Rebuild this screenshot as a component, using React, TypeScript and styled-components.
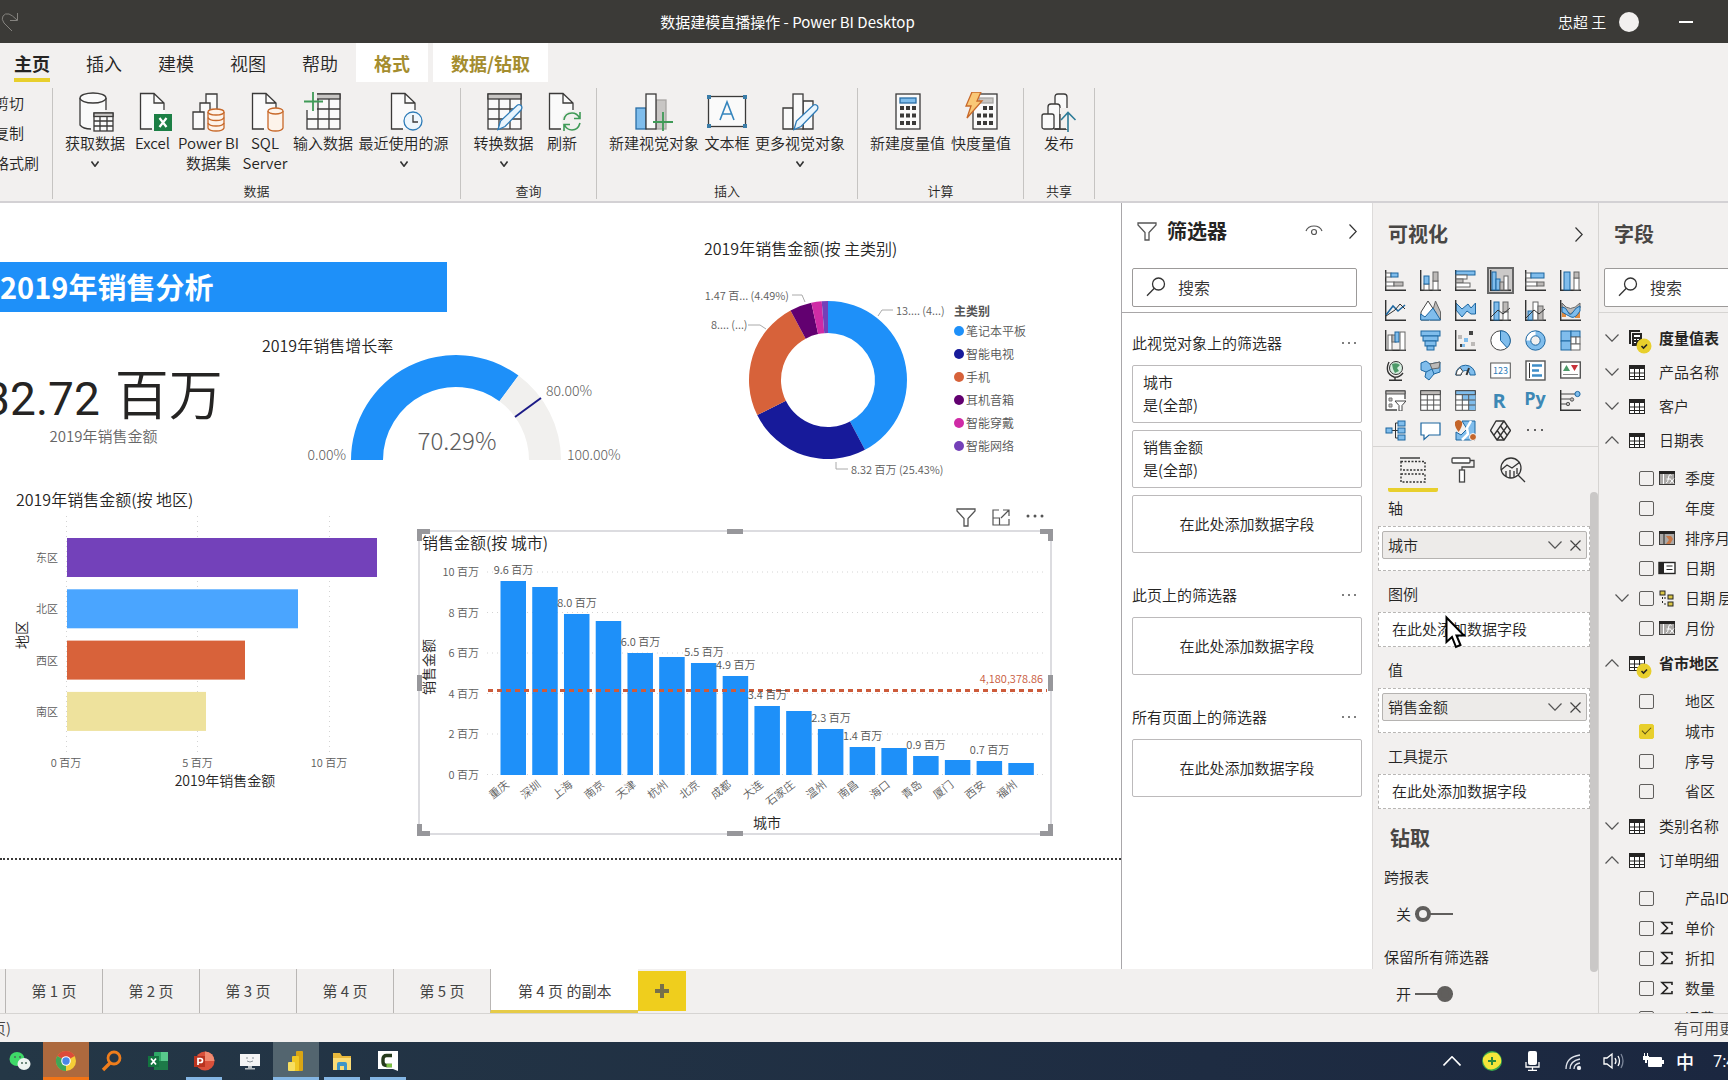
import React from 'react';
import styled, { createGlobalStyle, css } from 'styled-components';

const FONT = '"Noto Sans CJK SC", sans-serif';
const LABEL_FONT = '"Open Sans", "Noto Sans CJK SC", sans-serif';
const INK = '#252423';
const DARK = '#3b3a39';
const BLUE = '#1e90f9';
const SKY = '#80bdec';
const EDGE = '#1c66a0';
const GREY = '#bdbab8';
const YELLOW = '#e8cf2c';

const Global = createGlobalStyle`
  *, *::before, *::after { box-sizing: border-box; }
  body { margin: 0; overflow: hidden; background: #f2f0ef; color: ${INK}; font: 350 15px/20px ${FONT}; }
  button { border: 0; padding: 0; background: none; color: inherit; font: inherit; cursor: default; }
  input { margin: 0; font: inherit; color: inherit; }
  h1, h2, h3, p, ul { margin: 0; padding: 0; list-style: none; font-weight: 350; }
  svg { display: block; flex: none; }
`;

const Shell = styled.div`
  display: flex;
  flex-direction: column;
  height: 100vh;
  overflow: hidden;
`;

/* ---------- title bar ---------- */
const TitleBar = styled.header`
  display: flex;
  align-items: center;
  height: 43px;
  flex: none;
  background: #3b3a37;
  color: #fff;
`;
const WindowTitle = styled.h1`
  flex: 1;
  text-align: center;
  font-size: 15px;
  font-weight: 400;
`;
const Account = styled.div`
  display: flex;
  align-items: center;
  gap: 13px;
  width: 173px;
  padding-left: 3px;
`;
const Avatar = styled.span`
  width: 20px;
  height: 20px;
  border-radius: 50%;
  background: #f2f0ef;
`;
const Minimise = styled.button`
  width: 14px;
  height: 2px;
  margin-left: 27px;
  background: #fff;
`;

/* ---------- ribbon ---------- */
const Ribbon = styled.div`
  flex: none;
  padding-bottom: 2px;
  border-bottom: 2px solid #d3d1d4;
`;
const RibbonTabs = styled.nav`
  display: flex;
  height: 39px;
  margin: 0 0 6px -4px;
`;
const RibbonTab = styled.button<{ $active?: boolean; $context?: boolean }>`
  position: relative;
  padding: 0 18px;
  font-size: 18px;
  ${p => p.$active && css`
    font-weight: 700;
    &::after {
      content: '';
      position: absolute;
      left: 18px;
      right: 18px;
      bottom: 0;
      height: 4px;
      background: ${YELLOW};
    }
  `}
  ${p => p.$context && css`
    margin-right: 5px;
    background: #fff;
    color: #a48d2f;
    font-weight: 700;
  `}
`;
const RibbonGroups = styled.div`
  display: flex;
  height: 111px;
`;
const Group = styled.section`
  display: flex;
  flex-direction: column;
  justify-content: space-between;
  padding: 4px 9px 0;
  border-right: 1px solid #c6c4c2;
`;
const GroupItems = styled.div`
  display: flex;
`;
const GroupLabel = styled.h2`
  padding-bottom: 1px;
  text-align: center;
  font-size: 13px;
  line-height: 14px;
`;
const Command = styled.button<{ $w: number }>`
  display: flex;
  flex-direction: column;
  align-items: center;
  width: ${p => p.$w}px;
  white-space: nowrap;
  & > svg:first-child { margin-bottom: 1px; }
  & > svg + span + svg { margin-top: 8px; }
`;
const CommandText = styled.span`
  white-space: pre;
`;
const Clipboard = styled.section`
  display: flex;
  flex-direction: column;
  align-items: flex-start;
  width: 53px;
  border-right: 1px solid #c6c4c2;
  overflow: hidden;
`;
const ClipCommand = styled.button`
  margin-left: -6px;
  line-height: 30px;
  white-space: nowrap;
`;

/* ---------- workspace ---------- */
const Workspace = styled.main`
  display: flex;
  flex: 1;
  min-height: 0;
`;
const ReportSide = styled.div`
  display: flex;
  flex-direction: column;
  flex: 1;
  min-width: 0;
`;
const ReportRow = styled.div`
  display: flex;
  flex: 1;
  min-height: 0;
`;
const Canvas = styled.div`
  flex: 1;
  min-width: 0;
  overflow: hidden;
  background: #fff;
`;
const Page = styled.article`
  padding-bottom: 23px;
  border-bottom: 2px dotted #3b3a39;
`;
const TopRow = styled.div`
  display: flex;
`;
const Summary = styled.div`
  width: 700px;
  padding-top: 59px;
`;
const Banner = styled.h2`
  width: 447px;
  padding-bottom: 2px;
  background: ${BLUE};
  color: #fff;
  font-weight: 700;
  font-size: 29px;
  line-height: 48px;
`;
const SummaryRow = styled.div`
  display: flex;
  gap: 55px;
`;
const Card = styled.section`
  display: flex;
  flex-direction: column;
  align-items: center;
  width: 207px;
  padding-top: 50px;
`;
const CardValue = styled.p`
  display: flex;
  align-items: baseline;
  gap: 15px;
  height: 64px;
  font-size: 54px;
  line-height: 60px;
  white-space: nowrap;
`;
const CardNumber = styled.span`
  font-family: Roboto, sans-serif;
  font-size: 46px;
  font-weight: 400;
`;
const CardLabel = styled.p`
  font-size: 15px;
  color: #666;
`;
const VisualTitle = styled.h3`
  padding-bottom: 2px;
  font-size: 16px;
  line-height: 18px;
  white-space: nowrap;
`;
const Gauge = styled.section`
  padding-top: 24px;
  svg { margin-left: 38px; overflow: visible; }
`;
const Donut = styled.section`
  flex: 1;
  padding: 36px 0 0 4px;
`;
const DonutBody = styled.div`
  display: flex;
  gap: 9px;
  margin: 20px 0 0 -4px;
`;
const Legend = styled.div`
  padding-top: 24px;
  color: #555;
  font-size: 12px;
  line-height: 16px;
`;
const LegendTitle = styled.h4`
  margin: 0;
  font-weight: 700;
  font-size: 12px;
`;
const LegendItem = styled.li<{ $c: string }>`
  display: flex;
  align-items: center;
  gap: 2px;
  height: 23px;
  white-space: nowrap;
  &::before {
    content: '';
    width: 10px;
    height: 10px;
    border-radius: 50%;
    background: ${p => p.$c};
  }
`;
const BottomRow = styled.div`
  display: flex;
  padding-top: 6px;
`;
const RegionVisual = styled.section`
  width: 418px;
  h3 { padding-left: 16px; }
`;
const CityVisual = styled.section`
  width: 634px;
`;
const VisualHeader = styled.div`
  display: flex;
  justify-content: flex-end;
  align-items: center;
  gap: 16px;
  height: 40px;
  padding: 14px 8px 0 0;
`;
const Frame = styled.div`
  position: relative;
  padding-top: 1px;
  border: 2px solid #dcdce0;
  h3 { padding: 0 0 3px 2px; }
`;
const Handle = styled.i<{ $at: string }>`
  position: absolute;
  ${p => ({
    tl: 'left:-3px;top:-3px;width:13px;height:12px;border-left:5px solid;border-top:5px solid;',
    tr: 'right:-3px;top:-3px;width:13px;height:12px;border-right:5px solid;border-top:5px solid;',
    bl: 'left:-3px;bottom:-3px;width:13px;height:12px;border-left:5px solid;border-bottom:5px solid;',
    br: 'right:-3px;bottom:-3px;width:13px;height:12px;border-right:5px solid;border-bottom:5px solid;',
    t: 'left:50%;top:-3px;width:16px;border-top:5px solid;margin-left:-8px;',
    b: 'left:50%;bottom:-3px;width:16px;border-top:5px solid;margin-left:-8px;',
    l: 'left:-3px;top:50%;height:16px;border-left:5px solid;margin-top:-8px;',
    r: 'right:-3px;top:50%;height:16px;border-left:5px solid;margin-top:-8px;',
  } as Record<string, string>)[p.$at]}
  border-color: #97979b;
`;
const Chart = styled.svg`
  overflow: visible;
  font-size: 11px;
  fill: #5c5c5c;
`;

/* ---------- page tabs ---------- */
const PageTabs = styled.nav`
  display: flex;
  flex: none;
  height: 45px;
  padding-left: 5px;
  border-bottom: 1px solid #d6d4d2;
`;
const PageTab = styled.button<{ $active?: boolean }>`
  padding: 0 25px;
  min-width: 97px;
  border-left: 1px solid #b9b6b4;
  font-weight: 400;
  color: #444;
  white-space: nowrap;
  ${p => p.$active && css`
    padding: 3px 27px 0;
    background: #fff;
    border-bottom: 3px solid #e6cb48;
  `}
`;
const AddPage = styled.button`
  display: grid;
  place-items: center;
  width: 48px;
  height: 40px;
  margin-top: 2px;
  background: #efce1d;
`;

/* ---------- filters pane ---------- */
const Filters = styled.aside`
  width: 252px;
  flex: none;
  border-left: 1px solid #a9a7aa;
  border-right: 1px solid #dddbda;
  background: #fff;
`;
const FiltersTop = styled.div`
  padding: 15px 15px 5px 10px;
  border-bottom: 1px solid #a9a7a8;
`;
const PaneHead = styled.div`
  display: flex;
  align-items: center;
  gap: 10px;
  height: 26px;
  margin-bottom: 24px;
  padding-left: 5px;
`;
const PaneTitle = styled.h2<{ $soft?: boolean }>`
  flex: 1;
  font-size: 20px;
  font-weight: 700;
  line-height: 26px;
  color: ${p => (p.$soft ? '#484644' : INK)};
`;
const EyeButton = styled.button`
  margin-right: 16px;
`;
const SearchBox = styled.label`
  display: flex;
  align-items: center;
  gap: 12px;
  height: 39px;
  padding: 0 0 1px 13px;
  border: 1px solid #9c9a99;
  border-radius: 2px;
  background: #fff;
  input {
    min-width: 0;
    width: 100%;
    border: 0;
    padding: 0;
    background: none;
    outline: 0;
    font-size: 16px;
    &::placeholder { color: #333; opacity: 1; }
  }
`;
const FilterSection = styled.section`
  padding: 0 10px 32px;
  &:first-of-type { padding-top: 20px; }
`;
const FilterHead = styled.div`
  display: flex;
  justify-content: space-between;
  align-items: center;
  height: 20px;
  margin-bottom: 12px;
  padding-right: 5px;
`;
const FilterCard = styled.div<{ $drop?: boolean }>`
  display: flex;
  flex-direction: column;
  justify-content: center;
  height: 58px;
  padding: 0 10px 2px;
  border: 1px solid #bcbabb;
  border-radius: 2px;
  line-height: 23px;
  ${p => p.$drop && 'align-items: center;'}
  & + & { margin-top: 7px; }
`;

/* ---------- visualizations pane ---------- */
const VizPane = styled.aside`
  display: flex;
  flex-direction: column;
  width: 226px;
  flex: none;
  border-right: 1px solid #d6d4d2;
  border-bottom: 1px solid #d6d4d2;
`;
const VizTitle = styled.div`
  display: flex;
  align-items: center;
  height: 26px;
  margin: 18px 15px 20px;
`;
const VizGrid = styled.div`
  display: grid;
  grid-template-columns: repeat(6, 35px);
  grid-auto-rows: 27px;
  row-gap: 3px;
  padding: 0 0 2px 5px;
  border-bottom: 1px solid #d6d4d2;
`;
const VizButton = styled.button<{ $on?: boolean }>`
  display: grid;
  place-items: center;
  width: 27px;
  height: 27px;
  margin: 0 4px;
  ${p => p.$on && 'background: #cbc9c8; outline: 2px solid #666; outline-offset: -2px;'}
`;
const VizTabs = styled.div`
  display: flex;
  height: 45px;
  padding-left: 15px;
`;
const VizTab = styled.button<{ $on?: boolean }>`
  display: flex;
  flex-direction: column;
  align-items: center;
  width: 50px;
  padding-top: 10px;
  ${p => p.$on && css`
    border-bottom: 4px solid ${YELLOW};
    border-radius: 2px;
  `}
`;
const WellScroll = styled.div`
  display: flex;
  flex: 1;
  min-height: 0;
  overflow: hidden;
`;
const Wells = styled.div`
  flex: 1;
  padding: 7px 0 0 5px;
`;
const ScrollBar = styled.div`
  width: 8px;
  height: 480px;
  border-radius: 4px;
  background: #cac8c7;
`;
const WellLabel = styled.h3`
  margin-bottom: 9px;
  padding-left: 10px;
  font-size: 15px;
  line-height: 18px;
`;
const Well = styled.div`
  margin-bottom: 14px;
  border: 1px dashed #b8b6b4;
  background: #fff;
`;
const WellEmpty = styled.p`
  padding: 0 0 2px 13px;
  line-height: 31px;
`;
const WellItem = styled.div`
  display: flex;
  align-items: center;
  gap: 8px;
  height: 28px;
  margin: 4px 2px 11px 3px;
  padding: 0 5px;
  border: 1px solid #b5b3b1;
  border-radius: 2px;
  background: #edebe9;
  span { flex: 1; }
`;
const DrillTitle = styled.h2`
  margin: 16px 0;
  padding-left: 12px;
  font-size: 20px;
  font-weight: 700;
  line-height: 26px;
  color: #484644;
`;
const DrillLabel = styled.p`
  padding-left: 6px;
`;
const Toggle = styled.label`
  display: flex;
  align-items: center;
  gap: 4px;
  margin: 17px 0 23px;
  padding-left: 18px;
  input {
    appearance: none;
    display: flex;
    align-items: center;
    width: 38px;
    height: 16px;
    background: linear-gradient(#605e5c, #605e5c) 0 50% / 100% 2px no-repeat;
    &::before {
      content: '';
      width: 16px;
      height: 16px;
      border: 4px solid #605e5c;
      border-radius: 50%;
      background: #f2f0ef;
    }
    &:checked { justify-content: flex-end; }
    &:checked::before { background: #605e5c; }
  }
`;
const Cursor = styled.svg`
  position: fixed;
  left: 1445px;
  top: 615px;
`;

/* ---------- fields pane ---------- */
const Fields = styled.aside`
  display: flex;
  flex-direction: column;
  width: 129px;
  flex: none;
  overflow: hidden;
  white-space: nowrap;
  border-bottom: 1px solid #d6d4d2;
`;
const FieldsTop = styled.div`
  padding: 18px 0 5px 5px;
  border-bottom: 1px solid #d6d4d2;
  label { width: 220px; margin-top: 21px; }
  h2 { padding-left: 10px; }
`;
const Tree = styled.ul`
  flex: 1;
  min-height: 0;
  overflow: hidden;
  padding-top: 8px;
`;
const TableRow = styled.button<{ $bold?: boolean }>`
  display: flex;
  align-items: center;
  height: 34px;
  padding-left: 6px;
  font-weight: ${p => (p.$bold ? 700 : 350)};
  & > svg:nth-child(2) { margin: 0 13px 0 9px; overflow: visible; }
`;
const Children = styled.ul`
  padding: 6px 0 3px;
`;
const FieldRow = styled.li`
  display: flex;
  align-items: center;
  height: 30px;
`;
const Twist = styled.button`
  display: flex;
  flex: none;
  justify-content: center;
  width: 14px;
  margin: 0 10px 0 16px;
`;
const FieldLabel = styled.label`
  display: flex;
  flex: none;
  align-items: center;
`;
const Check = styled.input`
  appearance: none;
  display: grid;
  flex: none;
  place-items: center;
  width: 15px;
  height: 15px;
  border: 1px solid #605e5c;
  border-radius: 2px;
  &:checked { border-color: ${YELLOW}; background: ${YELLOW}; }
  &:checked::before {
    content: '';
    width: 9px;
    height: 5px;
    margin-top: -3px;
    border: solid #5c5216;
    border-width: 0 0 1px 1px;
    transform: rotate(-45deg);
  }
`;
const FieldGlyph = styled.span`
  display: flex;
  flex: none;
  justify-content: center;
  width: 18px;
  margin: 0 9px 0 4px;
`;

/* ---------- status and task bar ---------- */
const StatusBar = styled.footer`
  display: flex;
  justify-content: space-between;
  align-items: center;
  height: 28px;
  flex: none;
  overflow: hidden;
  white-space: nowrap;
`;
const PageCount = styled.span`
  margin-left: -9px;
  color: #444;
`;
const UpdateLink = styled.a`
  width: 54px;
  color: #444;
  text-decoration: none;
`;
const Taskbar = styled.div`
  display: flex;
  height: 38px;
  flex: none;
  background: linear-gradient(90deg, #243746, #1e2c42 70%, #1b2740);
  color: #fff;
`;
const AppButton = styled.button<{ $bg?: string; $line?: string; $wide?: boolean }>`
  position: relative;
  display: grid;
  place-items: center;
  width: 46px;
  background: ${p => p.$bg || 'none'};
  &:first-child { margin-left: -3px; }
  &::after {
    content: '';
    position: absolute;
    left: ${p => (p.$wide ? 0 : 5)}px;
    right: ${p => (p.$wide ? 0 : 5)}px;
    bottom: 0;
    height: 3px;
    background: ${p => p.$line || 'none'};
  }
`;
const Tray = styled.div`
  display: flex;
  align-items: center;
  gap: 19px;
  width: 285px;
  margin-left: auto;
  white-space: nowrap;
  & > svg:first-child { margin-right: 2px; }
`;
const Ime = styled.span`
  margin-left: -7px;
  font-size: 18px;
  font-weight: 500;
`;
const Clock = styled.time`
  font-family: ${LABEL_FONT};
  font-size: 16px;
  font-weight: 400;
`;

/* ---------- small glyphs ---------- */
const Chevron = ({ d, w = 14, h = 8, c = '#555', s = 1.2 }: { d: 'up' | 'down' | 'right'; w?: number; h?: number; c?: string; s?: number }) => (
  <svg width={w} height={h} fill="none" stroke={c} strokeWidth={s}>
    <path d={d === 'up' ? `M.5 ${h - 0.5}L${w / 2} .8L${w - 0.5} ${h - 0.5}` : d === 'down' ? `M.5 .5L${w / 2} ${h - 0.8}L${w - 0.5} .5` : `M.5 .5L${w - 0.8} ${h / 2}L.5 ${h - 0.5}`} />
  </svg>
);
const Magnifier = () => (
  <svg width="20" height="20" fill="none" stroke="#333" strokeWidth="1.3"><circle cx="12.5" cy="7" r="6" /><path d="M8.3 11.3L1 18.8" /></svg>
);
const Funnel = () => (
  <svg width="20" height="19" fill="none" stroke="#555" strokeWidth="1.3"><path d="M1 1H19V3L12 10.500V18H8V10.500L1 3Z" /></svg>
);
const Dots = () => (
  <svg width="16" height="4" fill="#555"><circle cx="2" cy="2" r="1" /><circle cx="8" cy="2" r="1" /><circle cx="14" cy="2" r="1" /></svg>
);

/* ---------- ribbon glyphs ---------- */
const R = ({ children }: { children: React.ReactNode }) => (
  <svg width="38" height="40" fill="#fafafa" stroke={DARK} strokeWidth="1.3">{children}</svg>
);
const Doc = () => <><path d="M7 1.500H20L31 11V37H7Z" stroke="none" /><path d="M18 37H6.500V1.500H20L30 11V18M20 1.500V11H30" fill="none" /></>;
const TableArt = ({ x = 2 }: { x?: number }) => (
  <><rect x={x} y="2" width="33" height="35" /><rect x={x} y="2" width="33" height="5" fill="#c8c6c4" /><path d={`M${x} 17h33M${x} 27h33M${x + 11} 7v30M${x + 22} 7v30`} fill="none" /></>
);
const Pencil = () => <path d="M13 37.500L15.500 29L32.500 13Q35 12 36.500 14Q37.500 16 36 18L20 34.500Z" fill="#e9f5fd" stroke="#2e7cb8" />;

const ribbonArt: Record<string, React.ReactNode> = {
  data: <R><path d="M4 6V33Q7 37 17 37V22H29V6" stroke="none" /><path d="M4 6V33Q7 37 15 37M30 6V18" fill="none" /><ellipse cx="17" cy="6" rx="13" ry="5" /><rect x="18" y="21" width="19" height="18" /><rect x="18" y="21" width="19" height="3.500" fill="#c8c6c4" /><path d="M18 29h19M18 34h19M24 24.500V39M31 24.500V39" /></R>,
  excel: <R><Doc /><rect x="20" y="22" width="18" height="17" fill="#1c7f45" stroke="none" /><path d="M25.500 26L32.500 35M32.500 26L25.500 35" stroke="#fff" strokeWidth="2.200" /></R>,
  dataset: <R><path d="M16 11V2H27V18M10 20V11H20V30M3 37V20H14V37Z" /><path d="M18 20V36Q19 39 26 39T34 36V20" fill="#fdf3ea" stroke="#c8692a" /><ellipse cx="26" cy="20" rx="8" ry="3" fill="#fdf3ea" stroke="#c8692a" /><path d="M18 25.500Q19 28.500 26 28.500T34 25.500M18 31Q19 34 26 34T34 31" fill="none" stroke="#c8692a" /></R>,
  sql: <R><Doc /><path d="M22 19V36Q23 39 29.500 39T37 36V19" fill="#fdf3ea" stroke="#c8692a" /><ellipse cx="29.500" cy="19" rx="7.500" ry="3" fill="#fdf3ea" stroke="#c8692a" /></R>,
  enter: <R><TableArt x={3} /><path d="M0 0h13v18H0z" fill="#f2f0ef" stroke="none" /><path d="M9 0V19M0 9.500H19" stroke="#3f9a57" strokeWidth="1.800" /></R>,
  recent: <R><Doc /><circle cx="28" cy="29" r="9" fill="#eef7fd" stroke="#2e7cb8" /><path d="M28 23V30H33" fill="none" /></R>,
  transform: <R><TableArt x={3} /><Pencil /></R>,
  refresh: <R><Doc /><circle cx="29" cy="29" r="10.500" fill="#f2f0ef" stroke="none" /><path d="M21 28Q22 21 29 21Q34 21 36.500 26M37 20V26.500H31M37 31Q35 38 29 38Q24 38 21.500 33M21 39V32.500H27" fill="none" stroke="#3f9a57" strokeWidth="1.600" /></R>,
  visual: <R><rect x="1" y="16" width="10" height="21" fill="#7fbdec" stroke="#2a6ea6" /><rect x="21" y="8" width="10" height="29" fill="#c8c6c4" stroke="#a8a6a4" /><rect x="11" y="2" width="10" height="35" /><path d="M28 20V39M18 30H38" stroke="#3f9a57" strokeWidth="1.800" /></R>,
  textbox: <svg width="42" height="40" fill="#fafafa" stroke={DARK} strokeWidth="1.300"><rect x="2.500" y="4.500" width="37" height="30" /><path d="M14 28L21 10L28 28M16 22H26" fill="none" stroke="#3585bd" strokeWidth="1.600" /><path d="M1 3h4v4H1zM37 3h4v4h-4zM1 32h4v4H1zM37 32h4v4h-4z" fill="#3b7da8" stroke="none" /></svg>,
  more: <R><path d="M2 16H12V37H2ZM22 9H32V37H22Z" /><rect x="12" y="2" width="10" height="35" /><Pencil /></R>,
  measure: <R><rect x="7" y="2" width="24" height="35" /><rect x="11" y="6" width="16" height="5" fill="#7fbdec" stroke="#2a6ea6" /><path d="M11 16h4M17 16h4M23 16h4M11 23.500h4M17 23.500h4M23 23.500h4M11 31h4M17 31h4M23 31h4" strokeWidth="4" /></R>,
  quick: <R><rect x="11" y="2" width="24" height="35" /><rect x="17" y="6" width="14" height="5" fill="#c8c6c4" stroke="#a8a6a4" /><path d="M15 23.500h4M21 23.500h4M27 23.500h4M15 31h4M21 31h4M27 31h4M21 16h4M27 16h4" strokeWidth="4" /><path d="M10 0H19L15 9H20L5 26L9 14H4Z" fill="#f9c877" stroke="#c8692a" /></R>,
  publish: <R><path d="M15 12V5Q15 2 18 2H24Q27 2 27 5V37H15M8 22V15Q8 12 11 12H17Q20 12 20 15V37" /><rect x="2" y="22" width="12" height="15" rx="2" /><path d="M20 16H34V37H20" fill="#f2f0ef" stroke="none" /><path d="M14 37H26M20 22V37" /><path d="M28 40V21M21 28L28 20.500L35.500 28" fill="none" stroke="#2e7c98" strokeWidth="1.600" /></R>,
};

type Cmd = { icon: string; text: string; w: number; menu?: boolean };
const groups: { label: string; items: Cmd[] }[] = [
  { label: '数据', items: [
    { icon: 'data', text: '获取数据', w: 66, menu: true },
    { icon: 'excel', text: 'Excel', w: 49 },
    { icon: 'dataset', text: 'Power BI\n数据集', w: 63 },
    { icon: 'sql', text: 'SQL\nServer', w: 50 },
    { icon: 'enter', text: '输入数据', w: 66 },
    { icon: 'recent', text: '最近使用的源', w: 95, menu: true },
  ] },
  { label: '查询', items: [{ icon: 'transform', text: '转换数据', w: 67, menu: true }, { icon: 'refresh', text: '刷新', w: 50 }] },
  { label: '插入', items: [{ icon: 'visual', text: '新建视觉对象', w: 96 }, { icon: 'textbox', text: '文本框', w: 50 }, { icon: 'more', text: '更多视觉对象', w: 96, menu: true }] },
  { label: '计算', items: [{ icon: 'measure', text: '新建度量值', w: 81 }, { icon: 'quick', text: '快度量值', w: 66 }] },
  { label: '共享', items: [{ icon: 'publish', text: '发布', w: 52 }] },
];

/* ---------- visual type glyphs, 21 x 21 ---------- */
const Axis = () => <path d="M.7 0V20.300H21" fill="none" stroke="#333" strokeWidth="1.400" />;
type Box = [number, number, number, number, ('b' | 'w' | 'g')];
const Boxes = ({ list }: { list: Box[] }) => (
  <>{list.map(([x, y, w, h, c], i) => (
    <rect key={i} x={x} y={y} width={w} height={h} fill={c === 'b' ? SKY : c === 'g' ? GREY : '#fff'} stroke={c === 'b' ? EDGE : '#666'} />
  ))}</>
);
const Grid = ({ blue }: { blue?: boolean }) => (
  <>
    <rect x=".7" y=".7" width="19.600" height="19.600" fill="#fff" stroke="#444" />
    {blue && <path d="M7 5h13.500v5.500H7zM13.500 10H20.500V20H13.500z" fill={SKY} />}
    <path d="M.7 .7h19.600v4H.7z" fill={blue ? SKY : GREY} stroke="#444" />
    <path d="M.7 10h19.600M.7 15h19.600M7.300 5v15M13.700 5v15" stroke="#555" fill="none" />
  </>
);
const vizArt: [string, React.ReactNode][] = [
  ['堆积条形图', <><Axis /><Boxes list={[[1, 3, 5, 4, 'w'], [6, 3, 7, 4, 'b'], [1, 12, 8, 4, 'w'], [9, 12, 9, 4, 'g']]} /></>],
  ['堆积柱形图', <><Axis /><Boxes list={[[4, 14, 5, 6, 'w'], [4, 6, 5, 8, 'b'], [13, 11, 5, 9, 'w'], [13, 2, 5, 9, 'g']]} /></>],
  ['簇状条形图', <><Axis /><Boxes list={[[1, 1, 19, 4, 'b'], [1, 5, 11, 4, 'w'], [1, 9, 7, 4, 'g'], [1, 13, 14, 4, 'w']]} /></>],
  ['簇状柱形图', <><Axis /><Boxes list={[[2, 2, 4, 18, 'b'], [6, 9, 4, 11, 'b'], [10, 12, 4, 8, 'g'], [14, 6, 4, 14, 'w']]} /></>],
  ['百分比条形图', <><Axis /><Boxes list={[[1, 3, 5, 5, 'w'], [6, 3, 13, 5, 'b'], [1, 12, 11, 4, 'w'], [12, 12, 7, 4, 'g']]} /></>],
  ['百分比柱形图', <><Axis /><Boxes list={[[4, 2, 6, 18, 'b'], [14, 8, 5, 12, 'w'], [14, 2, 5, 6, 'g']]} /></>],
  ['折线图', <><Axis /><path d="M1 15L8 6L13 11L20 5" fill="none" stroke={EDGE} strokeWidth="1.500" /><path d="M1 16L10 10L15 4L20 9" fill="none" stroke="#333" /></>],
  ['分区图', <><path d="M10 20L15.500 1L20.500 12V20Z" fill={GREY} stroke="#666" /><path d="M1 12L8 1L16 13L9 20H1Z" fill="#fff" stroke="#444" /><path d="M.7 20V14L5 17L13 8L20.500 20Z" fill={SKY} stroke={EDGE} /></>],
  ['堆积面积图', <><path d="M1 3L7 9L13 4L16 8L20.500 3V14H16L12 11L7 17L1 10Z" fill={SKY} stroke={EDGE} /><Axis /></>],
  ['折线和堆积柱形图', <><Axis /><Boxes list={[[4, 2, 5, 18, 'b'], [13, 2, 5, 10, 'g'], [13, 12, 5, 8, 'w']]} /><path d="M1 17L8 10L13 14L20 8" fill="none" stroke="#333" /></>],
  ['折线和簇状柱形图', <><Axis /><Boxes list={[[3, 11, 5, 9, 'b'], [8, 2, 5, 18, 'w'], [13, 6, 5, 14, 'g']]} /><path d="M1 18L9 10L14 14L20 9" fill="none" stroke="#333" /></>],
  ['功能区图', <><path d="M2 12h4v5H2zM15 12h5v6h-5z" fill="#e08a3e" /><path d="M2 3Q10 14 20 3V8Q10 19 2 8Z" fill={GREY} stroke="#666" /><path d="M2 7Q6 7 8 12T13 12T20 6V11Q15 19 11 17T2 12Z" fill={SKY} stroke={EDGE} /><Axis /></>],
  ['瀑布图', <><Axis /><Boxes list={[[3, 5, 4, 15, 'w'], [7, 5, 4, 7, 'g'], [10, 2, 4, 10, 'b'], [15, 2, 5, 18, 'w']]} /></>],
  ['漏斗图', <Boxes list={[[1, 1, 19, 5, 'b'], [3, 6, 15, 5, 'b'], [5, 11, 11, 5, 'b'], [7, 16, 7, 4, 'b']]} />],
  ['散点图', <><Axis /><path d="M14 1h4v4h-4zM5 14h3v3H5z" fill="#444" /><path d="M3 5h4v4H3zM16 12h4v4h-4z" fill={GREY} /><path d="M9 8h4v4H9zM7 14h3v3H7z" fill={SKY} /></>],
  ['饼图', <><circle cx="10.500" cy="10.500" r="9.700" fill="#fff" stroke="#444" /><path d="M10.500 .8A9.700 9.700 0 0 1 17 17.700L10.500 10.500Z" fill={SKY} stroke={EDGE} /></>],
  ['环形图', <><circle cx="10.500" cy="10.500" r="7.200" fill="none" stroke={SKY} strokeWidth="5" /><path d="M10.500 3.300A7.200 7.200 0 0 0 3.300 10.500" fill="none" stroke="#fff" strokeWidth="5" /><circle cx="10.500" cy="10.500" r="9.700" fill="none" stroke={EDGE} /><circle cx="10.500" cy="10.500" r="4.700" fill="none" stroke={EDGE} /></>],
  ['树状图', <Boxes list={[[1, 1, 10, 10, 'b'], [1, 11, 10, 9, 'b'], [11, 1, 9, 6, 'b'], [11, 7, 5, 7, 'w'], [16, 7, 4, 7, 'w'], [11, 14, 9, 6, 'w']]} />],
  ['地图', <><circle cx="11" cy="8" r="6.500" fill="#d7eee0" stroke="#333" /><path d="M7 4Q12 2 15 5L12 8L14 11L10 13L8 9Z" fill="#4c9a68" /><path d="M4 2Q-1 13 9 17Q14 18 18 13M10 17V20M4 20.300H17" fill="none" stroke="#333" strokeWidth="1.400" /></>],
  ['着色地图', <><path d="M1 3L6 1L10 4L20 2L20 12L14 14L9 20L5 17L6 12L1 10Z" fill={SKY} stroke={EDGE} /><path d="M10 4L20 2L19 8L12 9Z" fill={GREY} stroke="#666" /><path d="M6 12L12 9L14 14" fill="none" stroke={EDGE} /></>],
  ['仪表', <><path d="M.7 15A9.800 9.800 0 0 1 20.300 15H15A4.500 4.500 0 0 0 6 15Z" fill={SKY} stroke={EDGE} /><path d="M1 15A9.800 9.800 0 0 1 5 7.500L8 11.500A4 4 0 0 0 6 15Z" fill="#fff" stroke="#444" /><path d="M14 8L11.500 15" stroke="#333" strokeWidth="2" /></>],
  ['卡片图', <><rect x=".7" y="3" width="19.600" height="15" fill="#fff" stroke="#555" /><text x="10.500" y="14" textAnchor="middle" fontSize="9" fontWeight="400" fill="#2e7cb8">123</text></>],
  ['多行卡', <><rect x="1" y="1" width="19" height="19" fill="#fff" stroke="#555" strokeWidth="1.400" /><path d="M4.500 3v15" stroke="#333" /><path d="M7 5.500h10M7 10.500h7M7 15.500h10" stroke="#3f8dc7" strokeWidth="2.400" /></>],
  ['KPI', <><rect x=".7" y="2" width="19.600" height="16" fill="#fff" stroke="#555" strokeWidth="1.400" /><path d="M3 11L6.500 5L10 11Z" fill="#4c9a68" /><path d="M11 5H18L14.500 11Z" fill="#c8323a" /><path d="M3 14.500h15" stroke="#888" /></>],
  ['切片器', <><path d="M12 20H1V1H20V9" fill="#fff" stroke="#444" strokeWidth="1.300" /><path d="M1 1h19v3H1z" fill={GREY} stroke="#555" /><path d="M4 8h3v3H4zM4 14h3v3H4z" fill={GREY} stroke="#777" /><path d="M10 11H21L17 15.500V21H14V15.500Z" fill="#fff" stroke="#444" /></>],
  ['表', <Grid />],
  ['矩阵', <Grid blue />],
  ['R', <text x="9" y="18" textAnchor="middle" fontSize="20" fontWeight="700" fontFamily="Open Sans, sans-serif" fill="#3d88b5">R</text>],
  ['Py', <text x="10" y="15" textAnchor="middle" fontSize="18" fontWeight="700" fontFamily="Open Sans, sans-serif" fill="#3d88b5">Py</text>],
  ['关键影响因素', <><Axis /><path d="M1 4h14M1 9h9M1 14h5" stroke="#444" fill="none" /><circle cx="17.500" cy="4" r="2.600" fill={SKY} stroke={EDGE} /><circle cx="12" cy="9.500" r="1.700" fill={GREY} stroke="#555" /><circle cx="8" cy="14" r="1.700" fill={GREY} stroke="#555" /></>],
  ['分解树', <><path d="M7 10.500H13M10.500 3V18M10.500 3H14M10.500 18H14" stroke="#333" fill="none" /><Boxes list={[[1, 8, 6, 5, 'b'], [13, 1, 7, 5, 'b'], [13, 8, 7, 5, 'b'], [13, 15, 7, 5, 'b']]} /></>],
  ['问答', <path d="M1 3H20V15H9L4 19.500V15H1Z" fill="#fff" stroke={EDGE} strokeWidth="1.200" />],
  ['ArcGIS 地图', <><path d="M7 1H20V20H1V12L6 15L12 9Z" fill={SKY} stroke={EDGE} /><path d="M16 1L12 8L13 14L7 20" stroke="#fff" strokeWidth="2.500" fill="none" /><path d="M3.500 12Q-1 6 0 2Q3.500-2 7 2Q8 6 3.500 12Z" fill="#c4652a" /><circle cx="18" cy="17" r="3.500" fill="#c4652a" stroke="#fff" /></>],
  ['Power Apps', <g fill="none" stroke="#333" strokeWidth="1.400" strokeLinejoin="round"><path d="M6 1H14L20.500 10.500L14 20H7L.5 10.500Z" /><path d="M14 1L3.800 15.300M10.500 5.800L17.200 15.300M7.200 10.500L13.900 20M17.200 5.800L7 20" /></g>],
  ['更多', <g fill="#333"><circle cx="3" cy="10" r="1" /><circle cx="10" cy="10" r="1" /><circle cx="17" cy="10" r="1" /></g>],
];

/* ---------- charts ---------- */
const polar = (cx: number, cy: number, r: number, turn: number) => {
  const a = turn * Math.PI * 2;
  return `${(cx + r * Math.sin(a)).toFixed(2)} ${(cy - r * Math.cos(a)).toFixed(2)}`;
};
const ring = (cx: number, cy: number, R1: number, r: number, from: number, to: number) => {
  const big = to - from > 0.5 ? 1 : 0;
  return `M${polar(cx, cy, R1, from)}A${R1} ${R1} 0 ${big} 1 ${polar(cx, cy, R1, to)}L${polar(cx, cy, r, to)}A${r} ${r} 0 ${big} 0 ${polar(cx, cy, r, from)}Z`;
};
const categories = [
  { name: '笔记本平板', color: BLUE, share: 0.4225 },
  { name: '智能电视', color: '#171a9a', share: 0.2543 },
  { name: '手机', color: '#d7623a', share: 0.2445 },
  { name: '耳机音箱', color: '#620070', share: 0.0449 },
  { name: '智能穿戴', color: '#cf2ba6', share: 0.0211 },
  { name: '智能网络', color: '#7440b8', share: 0.0127 },
];
const DonutChart = () => {
  let at = 0;
  return (
    <Chart width="245" height="205" viewBox="700 279 245 205">
      {categories.map(c => {
        const from = at;
        at += c.share;
        return <path key={c.name} fill={c.color} d={ring(828, 380, 79, 47, from, at)} />;
      })}
      <path d="M792 295H802L805 302M878 316L882 310H893M748 325H760L766 329M836 462V469H848" fill="none" stroke="#aaa" />
      <text x="789" y="300" textAnchor="end">1.47 百... (4.49%)</text>
      <text x="896" y="315">13.... (4...)</text>
      <text x="711" y="329">8.... (...)</text>
      <text x="851" y="474">8.32 百万 (25.43%)</text>
    </Chart>
  );
};
const GaugeChart = () => (
  <Chart width="330" height="110" viewBox="300 356 330 110">
    <path d={ring(456, 460, 105, 73, -0.25, 0.10145)} fill={BLUE} />
    <path d={ring(456, 460, 105, 73, 0.10145, 0.25)} fill="#f1f0ee" />
    <path d="M515 417L541 398" stroke="#1b1a86" strokeWidth="2" />
    <g fontSize="14" fontWeight="300">
      <text x="346" y="460" textAnchor="end">0.00%</text>
      <text x="546" y="396">80.00%</text>
      <text x="567" y="460">100.00%</text>
    </g>
    <text x="457" y="450" textAnchor="middle" fontSize="24" fontWeight="300">70.29%</text>
  </Chart>
);
const regions = [
  { name: '东区', w: 310, color: '#7341ba' },
  { name: '北区', w: 231, color: '#4aa5ff' },
  { name: '西区', w: 178, color: '#d8623a' },
  { name: '南区', w: 139, color: '#eee29d' },
];
const RegionChart = () => (
  <Chart width="400" height="285" viewBox="0 510 400 285">
    <path d="M66.500 516V753M197.500 516V753M329.500 516V753" stroke="#d4d4d4" strokeDasharray="1 4" />
    {regions.map((r, i) => (
      <g key={r.name}>
        <rect x="67" y={538 + i * 51.3} width={r.w} height="39" fill={r.color} />
        <text x="58" y={562 + i * 51.3} textAnchor="end">{r.name}</text>
      </g>
    ))}
    {['0 百万', '5 百万', '10 百万'].map((t, i) => <text key={t} x={66 + i * 131.5} y="767" textAnchor="middle">{t}</text>)}
    <g fontSize="14" fill={INK}>
      <text x="225" y="786" textAnchor="middle">2019年销售金额</text>
      <text transform="translate(27 635) rotate(-90)" textAnchor="middle">地区</text>
    </g>
  </Chart>
);
const cities: [string, number, string?][] = [
  ['重庆', 194, '9.6 百万'], ['深圳', 188], ['上海', 161, '8.0 百万'], ['南京', 154], ['天津', 122, '6.0 百万'], ['杭州', 118],
  ['北京', 112, '5.5 百万'], ['成都', 99, '4.9 百万'], ['大连', 69, '3.4 百万'], ['石家庄', 64], ['温州', 46, '2.3 百万'],
  ['南昌', 28, '1.4 百万'], ['海口', 27], ['青岛', 19, '0.9 百万'], ['厦门', 15], ['西安', 14, '0.7 百万'], ['福州', 12],
];
const CityChart = () => (
  <Chart width="630" height="279" viewBox="420 554 630 279">
    {[0, 2, 4, 6, 8, 10].map(v => (
      <g key={v}>
        <path d={`M487 ${774.5 - v * 20.25}H1047`} stroke="#d4d4d4" strokeDasharray="1 4" />
        <text x="479" y={778.5 - v * 20.25} textAnchor="end">{v} 百万</text>
      </g>
    ))}
    {cities.map(([name, h], i) => (
      <g key={name}>
        <rect x={500.5 + i * 31.74} y={775 - h} width="25.500" height={h} fill={BLUE} />
        <text transform={`translate(${510 + i * 31.74} 786) rotate(-38)`} textAnchor="end">{name}</text>
      </g>
    ))}
    <path d="M488 690.500H1047" stroke="#cd5b3b" strokeWidth="3" strokeDasharray="5 4" />
    {cities.map(([name, h, label], i) => label && (
      <text key={name} x={513.5 + i * 31.74} y={768 - h} textAnchor="middle" fill="#555">{label}</text>
    ))}
    <text x="1043" y="683" textAnchor="end" fill="#c8593c">4,180,378.86</text>
    <g fontSize="14" fill={INK}>
      <text x="767" y="828" textAnchor="middle">城市</text>
      <text transform="translate(434 667) rotate(-90)" textAnchor="middle">销售金额</text>
    </g>
  </Chart>
);

/* ---------- field tree ---------- */
const T = ({ badge, calc }: { badge?: boolean; calc?: boolean }) => (
  <svg width="18" height="18">
    {calc
      ? <><path d="M1 1h11v2H3v12H1z" fill={INK} /><rect x="4" y="4" width="10" height="13" fill={INK} /><path d="M6 6h6v2H6zM6 10h2v1H6zM9 10h2v1H9zM6 13h2v1H6z" fill="#fff" /></>
      : <><rect x="1.500" y="2.500" width="15" height="14" fill="#fff" stroke={INK} /><path d="M1 2h16v4H1z" fill={INK} /><path d="M1 10h16M1 13.500h16M6.500 5v11M11.500 5v11" stroke={INK} /></>}
    {badge && <><circle cx="16" cy="17" r="7.500" fill={YELLOW} /><path d="M13.500 17L15.500 19L19 15.500" fill="none" stroke={INK} strokeWidth="1.600" /></>}
  </svg>
);
const glyphs: Record<string, React.ReactNode> = {
  fx: <svg width="18" height="16"><rect x="1.500" y="1.500" width="15" height="13" fill="#aaa8a6" stroke={DARK} /><path d="M1 1h16v3H1z" fill={INK} /><path d="M5.500 4v10" stroke="#fff" /><path d="M8 13Q10 13 10.500 8T13.500 5.500M8.500 9h4M12 8.500l4 5M16 8.500l-4 5" stroke="#fff" fill="none" /></svg>,
  sort: <svg width="18" height="16"><rect x="1.500" y="1.500" width="15" height="13" fill="#aaa8a6" stroke={DARK} /><path d="M1 1h16v3H1z" fill={INK} /><path d="M6 4v10" stroke={INK} /><path d="M8 6h5l2 3-3 5H8l3-4z" fill="#c97846" /></svg>,
  key: <svg width="18" height="14"><rect x="1" y="1.500" width="16" height="11" fill="#fff" stroke={INK} strokeWidth="1.400" /><path d="M1 1h5v12H1z" fill={INK} /><path d="M8.500 5h6M8.500 8.500h6" stroke={INK} /></svg>,
  tree: <svg width="18" height="18" fill="#d9c445" stroke={INK}><rect x="2" y="2" width="5" height="4" /><rect x="10" y="6" width="5" height="4" /><rect x="10" y="13" width="5" height="4" /><path d="M4.500 8v2M4.500 12v2M6 15h2M6 9h2" /></svg>,
  sum: <svg width="14" height="14" fill="none" stroke={INK} strokeWidth="1.600"><path d="M12 4V1.500H2L7.500 7L2 12.500H12V10" /></svg>,
};
type Field = { name: string; glyph?: string; on?: boolean; open?: boolean };
const tables: { name: string; used?: boolean; calc?: boolean; fields?: Field[] }[] = [
  { name: '度量值表', used: true, calc: true },
  { name: '产品名称' },
  { name: '客户' },
  { name: '日期表', fields: [
    { name: '季度', glyph: 'fx' }, { name: '年度' }, { name: '排序月', glyph: 'sort' }, { name: '日期', glyph: 'key' },
    { name: '日期 层次', glyph: 'tree', open: true }, { name: '月份', glyph: 'fx' },
  ] },
  { name: '省市地区', used: true, fields: [{ name: '地区' }, { name: '城市', on: true }, { name: '序号' }, { name: '省区' }] },
  { name: '类别名称' },
  { name: '订单明细', fields: [
    { name: '产品ID' }, { name: '单价', glyph: 'sum' }, { name: '折扣', glyph: 'sum' }, { name: '数量', glyph: 'sum' }, { name: '运费' },
  ] },
];

const DROP = '在此处添加数据字段';
const CloseX = () => <svg width="11" height="11" stroke="#444" strokeWidth="1.200"><path d="M.5 .5l10 10M10.500 .5l-10 10" /></svg>;

/* ---------- task bar glyphs ---------- */
const apps: { label: string; bg?: string; line?: string; wide?: boolean; art: React.ReactNode }[] = [
  { label: '微信', art: <><ellipse cx="8" cy="9" rx="7.500" ry="7" fill="#3fd968" /><ellipse cx="15" cy="14" rx="6.500" ry="6" fill="#eef3f0" /><path d="M5 7h2M10 7h2M12 13h2M16 13h2" stroke="#4a6a58" strokeWidth="1.500" /></> },
  { label: 'Chrome', bg: '#ad693e', line: '#f27416', wide: true, art: <><circle cx="11" cy="11" r="10" fill="#f5cd37" /><path d="M11 11L2.300 6A10 10 0 0 1 19.700 6Z" fill="#dc4b3a" /><path d="M11 11L2.300 6A10 10 0 0 0 11 21Z" fill="#3fa757" /><circle cx="11" cy="11" r="4.800" fill="#fff" /><circle cx="11" cy="11" r="3.700" fill="#4a86e8" /></> },
  { label: '搜索', art: <g fill="none" stroke="#ee7d1c" strokeWidth="2.800"><circle cx="13" cy="8" r="6" /><path d="M9 13L2 20" strokeWidth="3.400" /></g> },
  { label: 'Excel', art: <><rect x="7" y="2" width="14" height="18" rx="1" fill="#2fa867" /><path d="M14 2h7v9h-7z" fill="#58c98c" /><path d="M7 11h14v9H7z" fill="#1d7a48" /><rect x="1" y="6" width="11" height="11" fill="#12743f" /><path d="M4 8.500L9 14.500M9 8.500L4 14.500" stroke="#fff" strokeWidth="1.800" /></> },
  { label: 'PowerPoint', line: '#84b6e4', art: <><circle cx="12" cy="11" r="9.500" fill="#d9503a" /><path d="M12 1.500A9.500 9.500 0 0 1 21.500 11H12z" fill="#f08a70" /><rect x="1" y="6" width="11" height="11" fill="#b8331f" /><path d="M5 15V8.500H7.500Q9.500 8.500 9.500 10.500T7.500 12.500H5" stroke="#fff" strokeWidth="1.700" fill="none" /></> },
  { label: '显示器', art: <><rect x="1" y="4" width="20" height="12" fill="#f4f4f4" /><path d="M8 7v2M14 7v2M8 11q3 2 6 0" stroke="#8a9298" fill="none" /><path d="M9 16h4v2h3v1.500H6V18h3z" fill="#b5bcc0" /></> },
  { label: 'Power BI', bg: '#53656f', line: '#84b6e4', wide: true, art: <><rect x="11" y="1" width="7" height="20" rx="1" fill="#d9a514" /><rect x="7" y="6" width="7" height="15" rx="1" fill="#f0c724" /><rect x="3" y="12" width="7" height="9" rx="1" fill="#f8df60" /></> },
  { label: '文件资源管理器', line: '#84b6e4', art: <><path d="M2 3h7l2 3h9v13H2z" fill="#e9b93c" /><rect x="2" y="8" width="18" height="12" fill="#fbdc76" /><path d="M6 20v-6q0-2 2-2h6q2 0 2 2v6h-3v-4H9v4z" fill="#3f96c8" /></> },
  { label: 'Camtasia', line: '#84b6e4', art: <><path d="M1 1h20v20L16 19H1z" fill="#fff" /><path d="M15 5.500H9.500Q6 5.500 6 9V12Q6 15.500 9.500 15.500H15" fill="none" stroke="#263b1c" strokeWidth="3.400" /><path d="M9.500 15.500H15" stroke="#7cc142" strokeWidth="3.400" /></> },
];

export default function App() {
  return (
    <Shell>
      <Global />
      <TitleBar>
        <svg width="20" height="22" fill="none" stroke="#85837f"><path d="M12 20L4 12Q1 8 3 5Q5 2 9 3Q12 4 17 9M17.500 2V9.500H10" /></svg>
        <WindowTitle>数据建模直播操作 - Power BI Desktop</WindowTitle>
        <Account>
          <span>忠超 王</span>
          <Avatar />
          <Minimise aria-label="最小化" />
        </Account>
      </TitleBar>

      <Ribbon>
        <RibbonTabs>
          <RibbonTab $active>主页</RibbonTab>
          <RibbonTab>插入</RibbonTab>
          <RibbonTab>建模</RibbonTab>
          <RibbonTab>视图</RibbonTab>
          <RibbonTab>帮助</RibbonTab>
          <RibbonTab $context>格式</RibbonTab>
          <RibbonTab $context>数据/钻取</RibbonTab>
        </RibbonTabs>
        <RibbonGroups>
          <Clipboard>
            <ClipCommand>剪切</ClipCommand>
            <ClipCommand>复制</ClipCommand>
            <ClipCommand>格式刷</ClipCommand>
          </Clipboard>
          {groups.map(g => (
            <Group key={g.label}>
              <GroupItems>
                {g.items.map(it => (
                  <Command key={it.icon} $w={it.w}>
                    {ribbonArt[it.icon]}
                    <CommandText>{it.text}</CommandText>
                    {it.menu && <Chevron d="down" w={8} h={6} c="#333" s={1.6} />}
                  </Command>
                ))}
              </GroupItems>
              <GroupLabel>{g.label}</GroupLabel>
            </Group>
          ))}
        </RibbonGroups>
      </Ribbon>

      <Workspace>
        <ReportSide>
          <ReportRow>
            <Canvas>
              <Page>
                <TopRow>
                  <Summary>
                    <Banner>2019年销售分析</Banner>
                    <SummaryRow>
                      <Card>
                        <CardValue><CardNumber>32.72</CardNumber>百万</CardValue>
                        <CardLabel>2019年销售金额</CardLabel>
                      </Card>
                      <Gauge>
                        <VisualTitle>2019年销售增长率</VisualTitle>
                        <GaugeChart />
                      </Gauge>
                    </SummaryRow>
                  </Summary>
                  <Donut>
                    <VisualTitle>2019年销售金额(按 主类别)</VisualTitle>
                    <DonutBody>
                      <DonutChart />
                      <Legend>
                        <LegendTitle>主类别</LegendTitle>
                        <ul>{categories.map(c => <LegendItem key={c.name} $c={c.color}>{c.name}</LegendItem>)}</ul>
                      </Legend>
                    </DonutBody>
                  </Donut>
                </TopRow>
                <BottomRow>
                  <RegionVisual>
                    <VisualTitle>2019年销售金额(按 地区)</VisualTitle>
                    <RegionChart />
                  </RegionVisual>
                  <CityVisual>
                    <VisualHeader>
                      <button aria-label="筛选器"><Funnel /></button>
                      <button aria-label="焦点模式"><svg width="18" height="17" fill="none" stroke="#555" strokeWidth="1.200"><path d="M7 1H1V16H17V10M11 1H17V7M17 1L9 9M1 9H7.500V16" /></svg></button>
                      <button aria-label="更多选项"><svg width="18" height="6" fill="#555"><circle cx="2" cy="2" r="1.500" /><circle cx="9" cy="2" r="1.500" /><circle cx="16" cy="2" r="1.500" /></svg></button>
                    </VisualHeader>
                    <Frame>
                      <VisualTitle>销售金额(按 城市)</VisualTitle>
                      <CityChart />
                      {['tl', 'tr', 'bl', 'br', 't', 'b', 'l', 'r'].map(a => <Handle key={a} $at={a} />)}
                    </Frame>
                  </CityVisual>
                </BottomRow>
              </Page>
            </Canvas>

            <Filters>
              <FiltersTop>
                <PaneHead>
                  <Funnel />
                  <PaneTitle>筛选器</PaneTitle>
                  <EyeButton aria-label="隐藏筛选器"><svg width="18" height="14" fill="none" stroke="#555" strokeWidth="1.200"><path d="M1 7Q3 2 9 2T17 7" /><circle cx="9" cy="8" r="2.500" /></svg></EyeButton>
                  <Chevron d="right" w={8} h={15} c="#333" />
                </PaneHead>
                <SearchBox>
                  <Magnifier />
                  <input type="text" placeholder="搜索" aria-label="搜索筛选器" />
                </SearchBox>
              </FiltersTop>
              <FilterSection>
                <FilterHead>此视觉对象上的筛选器<Dots /></FilterHead>
                <FilterCard><span>城市</span><span>是(全部)</span></FilterCard>
                <FilterCard><span>销售金额</span><span>是(全部)</span></FilterCard>
                <FilterCard $drop>{DROP}</FilterCard>
              </FilterSection>
              <FilterSection>
                <FilterHead>此页上的筛选器<Dots /></FilterHead>
                <FilterCard $drop>{DROP}</FilterCard>
              </FilterSection>
              <FilterSection>
                <FilterHead>所有页面上的筛选器<Dots /></FilterHead>
                <FilterCard $drop>{DROP}</FilterCard>
              </FilterSection>
            </Filters>
          </ReportRow>

          <PageTabs>
            {[1, 2, 3, 4, 5].map(n => <PageTab key={n}>第 {n} 页</PageTab>)}
            <PageTab $active>第 4 页 的副本</PageTab>
            <AddPage aria-label="新建页"><svg width="14" height="14" stroke="#77704a" strokeWidth="4"><path d="M7 0V14M0 7H14" /></svg></AddPage>
          </PageTabs>
        </ReportSide>

        <VizPane>
          <VizTitle>
            <PaneTitle $soft>可视化</PaneTitle>
            <Chevron d="right" w={8} h={15} c="#333" />
          </VizTitle>
          <VizGrid>
            {vizArt.map(([name, art], i) => (
              <VizButton key={name} aria-label={name} $on={i === 3}><svg width="21" height="21">{art}</svg></VizButton>
            ))}
          </VizGrid>
          <VizTabs>
            <VizTab $on aria-label="字段"><svg width="26" height="26" fill="none" stroke="#333" strokeWidth="1.400"><path d="M0 1H20" /><path d="M1 4.500H25V13H1ZM1 17H25V25H1Z" strokeDasharray="2 1.500" /></svg></VizTab>
            <VizTab aria-label="格式"><svg width="24" height="26" fill="#fff" stroke="#444" strokeWidth="1.300"><rect x="1" y="1" width="18" height="5" rx="1" /><path d="M19 3.500H23V10H11V13" fill="none" /><rect x="8.500" y="13" width="5" height="12" /></svg></VizTab>
            <VizTab aria-label="分析"><svg width="26" height="26" fill="none" stroke="#333" strokeWidth="1.300"><circle cx="11" cy="11" r="10" /><path d="M18 18L25 25M1 13L7 8L12 11L20 5M6 19V14M10 21V13M14 20V14M17 17V11" /></svg></VizTab>
          </VizTabs>
          <WellScroll>
            <Wells>
              <WellLabel>轴</WellLabel>
              <Well><WellItem><span>城市</span><Chevron d="down" /><CloseX /></WellItem></Well>
              <WellLabel>图例</WellLabel>
              <Well><WellEmpty>{DROP}</WellEmpty></Well>
              <WellLabel>值</WellLabel>
              <Well><WellItem><span>销售金额</span><Chevron d="down" /><CloseX /></WellItem></Well>
              <WellLabel>工具提示</WellLabel>
              <Well><WellEmpty>{DROP}</WellEmpty></Well>
              <DrillTitle>钻取</DrillTitle>
              <DrillLabel>跨报表</DrillLabel>
              <Toggle>关<input type="checkbox" role="switch" /></Toggle>
              <DrillLabel>保留所有筛选器</DrillLabel>
              <Toggle>开<input type="checkbox" role="switch" defaultChecked /></Toggle>
            </Wells>
            <ScrollBar />
          </WellScroll>
        </VizPane>

        <Fields>
          <FieldsTop>
            <PaneTitle $soft>字段</PaneTitle>
            <SearchBox>
              <Magnifier />
              <input type="text" placeholder="搜索" aria-label="搜索字段" />
            </SearchBox>
          </FieldsTop>
          <Tree>
            {tables.map(t => (
              <li key={t.name}>
                <TableRow $bold={t.used}>
                  <Chevron d={t.fields ? 'up' : 'down'} />
                  <T badge={t.used} calc={t.calc} />
                  {t.name}
                </TableRow>
                {t.fields && (
                  <Children>
                    {t.fields.map(f => (
                      <FieldRow key={f.name}>
                        <Twist as={f.open ? 'button' : 'span'}>{f.open && <Chevron d="down" />}</Twist>
                        <FieldLabel>
                          <Check type="checkbox" defaultChecked={f.on} />
                          <FieldGlyph>{f.glyph && glyphs[f.glyph]}</FieldGlyph>
                          {f.name}
                        </FieldLabel>
                      </FieldRow>
                    ))}
                  </Children>
                )}
              </li>
            ))}
          </Tree>
        </Fields>
      </Workspace>

      <StatusBar>
        <PageCount>页)</PageCount>
        <UpdateLink href="#">有可用更新</UpdateLink>
      </StatusBar>

      <Taskbar>
        {apps.map(a => (
          <AppButton key={a.label} aria-label={a.label} $bg={a.bg} $line={a.line} $wide={a.wide}>
            <svg width="22" height="22">{a.art}</svg>
          </AppButton>
        ))}
        <Tray>
          <Chevron d="up" w={18} h={10} c="#fff" s={1.6} />
          <svg width="20" height="20"><circle cx="10" cy="10" r="10" fill="#3aa84c" /><path d="M1 7Q6 0 15 2Q20 6 19 12Q14 20 6 18Q0 14 1 7" fill="#f5e63a" /><path d="M10 6v8M6 10h8" stroke="#2c8a3c" strokeWidth="2" /></svg>
          <svg width="22" height="20" fill="#fff"><rect x="7" y="0" width="9" height="14" rx="2" /><path d="M5 11V16H18V11M11.500 16V19M7 19.300H16" fill="none" stroke="#fff" strokeWidth="1.300" /></svg>
          <svg width="22" height="18" fill="none" stroke="#dfe3ea" strokeWidth="1.300"><path d="M4 17Q4 5 18 3M8 17Q8 9 18 7M12 17Q12 12 18 11" /><circle cx="17" cy="16" r="1.500" fill="#fff" /></svg>
          <svg width="21" height="18" fill="none" stroke="#fff" strokeWidth="1.300"><path d="M1 6H4L9 2V16L4 12H1Z" /><path d="M12 6Q14 9 12 12M15 4Q18 9 15 14" /><path d="M18 2Q22 9 18 16" stroke="#7c869a" /></svg>
          <svg width="21" height="16"><rect x="5" y="4" width="14" height="10" rx="1" fill="#fff" /><path d="M19 7h2v4h-2zM0 3h6v4H4v3H2V7H0z" fill="#fff" /><path d="M1.500 0v3M4.500 0v3" stroke="#fff" /></svg>
          <Ime>中</Ime>
          <Clock>7:43</Clock>
        </Tray>
      </Taskbar>

      <Cursor width="22" height="34" fill="#fff" stroke="#000" strokeWidth="2"><path d="M1.500 2.500V27L7 22L11 32L15.500 30L11.500 20.500H19Z" /></Cursor>
    </Shell>
  );
}
